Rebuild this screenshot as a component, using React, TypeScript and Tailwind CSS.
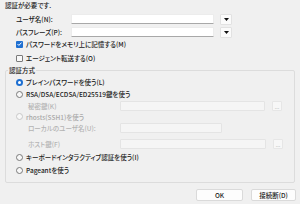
import { ReactNode } from 'react';

const Input = ({ w, disabled }: { w: string; disabled?: boolean }) => (
    <div
        className={`${w} h-[10px] shrink-0 rounded-[1px] border ${
            disabled
                ? 'bg-[#f5f5f5] border-[#e4e4e4]'
                : 'bg-white border-[#ececec] border-b-[#a8a8a8]'
        }`}
    />
);

const Radio = ({ checked, disabled }: { checked?: boolean; disabled?: boolean }) =>
    checked ? (
        <span className="w-[7px] h-[7px] rounded-full bg-[#1e6fd1] flex items-center justify-center shrink-0">
            <span className="w-[3px] h-[3px] rounded-full bg-white" />
        </span>
    ) : (
        <span
            className={`w-[7px] h-[7px] rounded-full border shrink-0 bg-[#f8f8f8] ${
                disabled ? 'border-[#c8c8c8]' : 'border-[#7a7a7a]'
            }`}
        />
    );

const RadioRow = ({ label, checked, disabled, cls }: { label: string; checked?: boolean; disabled?: boolean; cls: string }) => (
    <div className={`flex items-center ml-[10px] ${cls}`}>
        <Radio checked={checked} disabled={disabled} />
        <span className={`ml-[3px] ${disabled ? 'text-[#a9a9a9]' : ''}`}>{label}</span>
    </div>
);

const SubRow = ({ label, w, browse, cls }: { label: string; w: string; browse?: boolean; cls: string }) => (
    <div className={`flex items-center ${cls}`}>
        <span className="w-[114px] shrink-0 pl-[22px] text-[#b4b4b4]">{label}</span>
        <Input w={w} disabled />
        {browse && (
            <div className="ml-[7px] w-[10px] h-[10px] rounded-[1px] bg-[#f7f7f7] border border-[#e6e6e6] flex items-end justify-center text-[5px] leading-[6px] text-[#b0b0b0]">
                ...
            </div>
        )}
    </div>
);

const Btn = ({ children, w }: { children: ReactNode; w: string }) => (
    <div className={`${w} h-[12px] rounded-[2px] bg-[#fdfdfd] border border-[#dadada] flex items-center justify-center`}>
        {children}
    </div>
);

const Drop = () => (
    <div className="ml-[6px] w-[12px] h-[11px] rounded-[1px] bg-[#fbfbfb] border border-[#e2e2e2] flex items-center justify-center">
        <svg width="5" height="3" viewBox="0 0 5 3"><path d="M0 0h5L2.5 3z" fill="#111" /></svg>
    </div>
);

export default function App() {
    return (
        <div
            className="w-[300px] h-[204px] bg-[#f0f0f0] text-[#1a1a1a] text-[6.5px] leading-[8px] font-medium [font-feature-settings:'palt'] flex flex-col overflow-hidden"
            style={{ fontFamily: '"Noto Sans CJK JP", "Noto Sans", sans-serif' }}
        >
            {/* Title */}
            <div className="h-[10px] pl-[5px] flex items-center">認証が必要です.</div>

            {/* Credentials */}
            <div className="mt-[3px] h-[12px] pl-[16px] flex items-center">
                <span className="w-[55px] shrink-0">ユーザ名(N):</span>
                <Input w="w-[143px]" />
                <Drop />
            </div>
            <div className="mt-[1px] h-[12px] pl-[16px] flex items-center">
                <span className="w-[55px] shrink-0">パスフレーズ(P):</span>
                <Input w="w-[143px]" />
                <Drop />
            </div>

            {/* Checkboxes */}
            <div className="h-[12px] pl-[16px] flex items-center">
                <span className="w-[7px] h-[7px] rounded-[1px] bg-[#1e6fd1] flex items-center justify-center">
                    <svg width="5" height="4" viewBox="0 0 5 4"><path d="M0.5 2l1.4 1.4L4.5 0.6" stroke="#fff" strokeWidth="1" fill="none" /></svg>
                </span>
                <span className="ml-[3px]">パスワードをメモリ上に記憶する(M)</span>
            </div>
            <div className="mt-[2px] h-[12px] pl-[16px] flex items-center">
                <span className="w-[7px] h-[7px] rounded-[1px] border border-[#7a7a7a] bg-[#f8f8f8]" />
                <span className="ml-[3px]">エージェント転送する(O)</span>
            </div>

            {/* Auth method group */}
            <fieldset className="mt-[2px] ml-[5px] w-[290px] border border-[#dcdcdc] rounded-[2px] pb-[6px]">
                <legend className="ml-[2px] px-[1px] h-[8px] leading-[8px]">認証方式</legend>
                <RadioRow cls="mt-[2px] h-[12px]" label="プレインパスワードを使う(L)" checked />
                <RadioRow cls="h-[12px]" label="RSA/DSA/ECDSA/ED25519鍵を使う" />
                <SubRow cls="h-[11px]" label="秘密鍵(K)" w="w-[145px]" browse />
                <RadioRow cls="h-[11px]" label="rhosts(SSH1)を使う" disabled />
                <SubRow cls="h-[11px]" label="ローカルのユーザ名(U):" w="w-[102px]" />
                <SubRow cls="mt-[5px] h-[11px]" label="ホスト鍵(F)" w="w-[146px]" browse />
                <RadioRow cls="mt-[2px] h-[12px]" label="キーボードインタラクティブ認証を使う(I)" />
                <RadioRow cls="mt-[1px] h-[12px]" label="Pageantを使う" />
            </fieldset>

            {/* Buttons */}
            <div className="mt-[6px] flex justify-end gap-[8px] pr-[4px]">
                <Btn w="w-[47px]">OK</Btn>
                <Btn w="w-[45px]">接続断(D)</Btn>
            </div>
        </div>
    );
}
